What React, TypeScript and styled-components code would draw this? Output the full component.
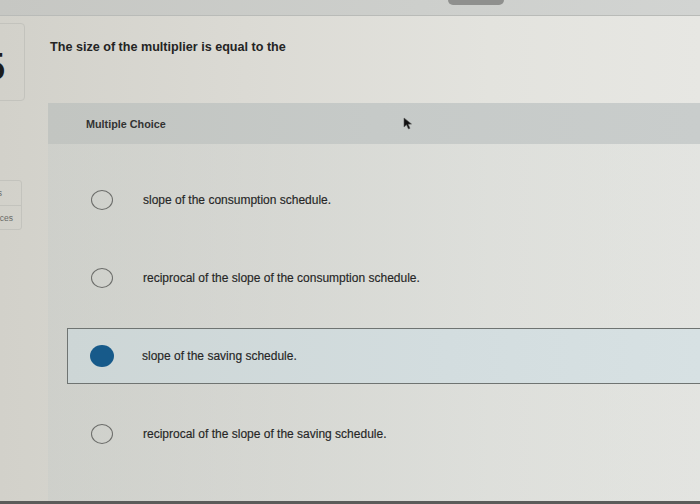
import React from "react";
import styled, { createGlobalStyle } from "styled-components";

const Global = createGlobalStyle`
  html, body { margin: 0; padding: 0; }
  body { background: #dcdbd5; font-family: "Liberation Sans", Arial, sans-serif; }
`;

const Screen = styled.div`
  position: relative;
  width: 700px;
  height: 504px;
  overflow: hidden;
  display: flex;
  flex-direction: column;
  background: linear-gradient(90deg, #d2d1ca 0%, #dbdad4 35%, #e3e3de 70%, #e7e7e3 100%);
`;

const TopBar = styled.div`
  height: 15px;
  flex: none;
  display: flex;
  justify-content: flex-start;
  padding-left: 448px;
  background: linear-gradient(90deg, #c6c7c3, #cdcfcc 60%, #d2d4d2);
  border-bottom: 1px solid #b9bbb8;
`;

const Handle = styled.div`
  width: 56px;
  height: 5px;
  background: #8f908e;
  border-radius: 0 0 6px 6px;
`;

const Body = styled.div`
  flex: 1;
  display: grid;
  grid-template-columns: 48px 1fr;
`;

const Side = styled.div`
  display: flex;
  flex-direction: column;
  padding-top: 7px;
`;

const NumberCard = styled.div`
  width: 64px;
  height: 78px;
  margin-left: -39px;
  border: 1px solid #c3c3bd;
  border-radius: 4px;
  box-sizing: border-box;
  display: flex;
  align-items: center;
  justify-content: flex-end;
  padding-right: 18px;
  padding-top: 6px;
  font-family: "Open Sans", "Liberation Sans", sans-serif;
  font-size: 38px;
  font-weight: 600;
  color: #1d1d1d;
`;

const NavBox = styled.div`
  margin-top: 79px;
  width: 60px;
  margin-left: -38px;
  height: 50px;
  border: 1px solid #c3c3bd;
  border-radius: 3px;
  box-sizing: border-box;
  display: grid;
  grid-template-rows: 1fr 1fr;
`;

const NavItem = styled.div<{ $divider?: boolean; $inset: number }>`
  display: flex;
  align-items: center;
  justify-content: flex-end;
  padding-right: ${(p) => p.$inset}px;
  font-size: 8.5px;
  color: #6a6b68;
  white-space: nowrap;
  overflow: hidden;
  border-top: ${(p) => (p.$divider ? "1px solid #c3c3bd" : "none")};
`;

const Main = styled.div`
  display: flex;
  flex-direction: column;
`;

const Question = styled.div`
  height: 87px;
  box-sizing: border-box;
  padding: 24px 0 0 2px;
  font-family: "Liberation Sans", Arial, sans-serif;
  font-weight: 700;
  font-size: 12.6px;
  color: #242424;
`;

const Panel = styled.div`
  flex: 1;
  display: flex;
  flex-direction: column;
  background: linear-gradient(90deg, rgba(196, 202, 200, 0.35), rgba(215, 220, 218, 0.25));
`;

const PanelHeader = styled.div`
  height: 41px;
  flex: none;
  display: flex;
  align-items: center;
  padding-left: 38px;
  background: linear-gradient(90deg, #c2c5c1 0%, #c6cac8 50%, #c9cdcc 100%);
  font-family: "Liberation Sans", Arial, sans-serif;
  font-size: 10.8px;
  font-weight: 700;
  color: #333;
`;

const Options = styled.div`
  display: flex;
  flex-direction: column;
  gap: 22px;
  padding-top: 28px;
`;

const Option = styled.div<{ $selected?: boolean }>`
  height: 56px;
  box-sizing: border-box;
  display: flex;
  align-items: center;
  gap: ${(p) => (p.$selected ? "28px" : "30px")};
  margin-left: 19px;
  padding-left: ${(p) => (p.$selected ? "22px" : "23px")};
  border: ${(p) => (p.$selected ? "1px solid #6f7472" : "1px solid transparent")};
  border-right: none;
  background: ${(p) =>
    p.$selected
      ? "linear-gradient(90deg, #cdd6d6, #d3dddf 60%, #d7e1e3)"
      : "transparent"};
  font-family: "Liberation Sans", Arial, sans-serif;
  font-size: 12px;
  color: #262626;
  -webkit-text-stroke: 0.15px #262626;
`;

const Radio = styled.span<{ $checked?: boolean }>`
  width: 22px;
  height: 20px;
  box-sizing: border-box;
  border-radius: 50%;
  flex: none;
  border: ${(p) => (p.$checked ? "none" : "1.5px solid #6c6d6a")};
  background: ${(p) => (p.$checked ? "#175a8a" : "transparent")};
  ${(p) => (p.$checked ? "width: 24px; height: 22px;" : "")}
`;

const Bezel = styled.div`
  height: 3px;
  flex: none;
  background: #5b5c5a;
`;

const Cursor = styled.svg`
  position: absolute;
  left: 403px;
  top: 117px;
`;

const options = [
  "slope of the consumption schedule.",
  "reciprocal of the slope of the consumption schedule.",
  "slope of the saving schedule.",
  "reciprocal of the slope of the saving schedule.",
];

export default function App() {
  return (
    <Screen>
      <Global />
      <TopBar>
        <Handle />
      </TopBar>
      <Body>
        <Side>
          <NumberCard>5</NumberCard>
          <NavBox>
            <NavItem $inset={19}>Hints</NavItem>
            <NavItem $divider $inset={8}>References</NavItem>
          </NavBox>
        </Side>
        <Main>
          <Question>The size of the multiplier is equal to the</Question>
          <Panel>
            <PanelHeader>Multiple Choice</PanelHeader>
            <Options>
              {options.map((o, i) => (
                <Option key={o} $selected={i === 2}>
                  <Radio $checked={i === 2} />
                  <span>{o}</span>
                </Option>
              ))}
            </Options>
          </Panel>
        </Main>
      </Body>
      <Bezel />
      <Cursor width="11" height="13" viewBox="0 0 11 13">
        <path d="M1 1 L1 10 L3.5 7.8 L5.5 12 L7 11.3 L5.1 7.2 L8.5 7 Z" fill="#111" stroke="#555" strokeWidth="0.6" />
      </Cursor>
    </Screen>
  );
}
